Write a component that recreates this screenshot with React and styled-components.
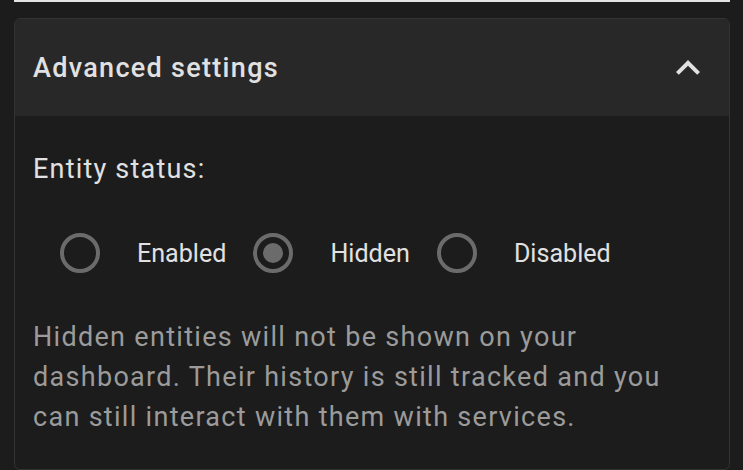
import React, { useState } from "react";
import styled, { createGlobalStyle } from "styled-components";

const Global = createGlobalStyle`
  html, body { margin: 0; padding: 0; background: #1c1c1c; }
  body { font-family: Roboto, "Noto Sans", sans-serif; -webkit-font-smoothing: antialiased; }
`;

const Page = styled.div`
  padding: 0 13px 0 14px;
  display: flex;
  flex-direction: column;
  gap: 16px;
  min-height: 470px;
  box-sizing: border-box;
`;

const TopRule = styled.div`
  height: 2px;
  background: #e4e4e4;
`;

const Panel = styled.section`
  border: 1px solid #333333;
  border-radius: 6px;
  overflow: hidden;
  background: #1c1c1c;
  flex: 1;
`;

const Header = styled.div`
  height: 97px;
  background: #282828;
  display: flex;
  align-items: center;
  justify-content: space-between;
  padding: 0 17px 0 18px;
`;

const Title = styled.h2`
  margin: 0;
  font-size: 27px;
  font-weight: 500;
  letter-spacing: 1.3px;
  color: #e1e1e1;
`;

const Chevron = styled.svg`
  width: 48px;
  height: 48px;
  fill: #e1e1e1;
  display: block;
`;

const Body = styled.div`
  padding: 33px 17px 0 18px;
`;

const Label = styled.div`
  font-size: 27px;
  line-height: 40px;
  letter-spacing: 1.2px;
  color: #e1e1e1;
`;

const RadioRow = styled.div`
  display: flex;
  align-items: center;
  height: 48px;
  margin-top: 40px;
`;

const Option = styled.label`
  display: flex;
  align-items: center;
  cursor: pointer;
`;

const RadioBox = styled.span`
  width: 94px;
  height: 48px;
  display: flex;
  align-items: center;
  justify-content: center;
`;

const Circle = styled.span`
  width: 40px;
  height: 40px;
  border-radius: 50%;
  border: 4px solid #6b6b6b;
  box-sizing: border-box;
  display: flex;
  align-items: center;
  justify-content: center;
  &::after {
    content: "";
    width: 20px;
    height: 20px;
    border-radius: 50%;
    background: #6b6b6b;
    display: ${(p) => (p.$checked ? "block" : "none")};
  }
`;

const OptionText = styled.span`
  padding-left: 10px;
  font-size: 25.1px;
  letter-spacing: 0;
  color: #e1e1e1;
`;

const Description = styled.p`
  margin: 40px 0 0;
  font-size: 27px;
  line-height: 40px;
  letter-spacing: 1.3px;
  color: #9b9b9b;
`;

const options = ["Enabled", "Hidden", "Disabled"];

export default function App() {
  const [value, setValue] = useState("Hidden");
  return (
    <>
      <Global />
      <Page>
        <TopRule />
        <Panel>
          <Header>
            <Title>Advanced settings</Title>
            <Chevron viewBox="0 0 24 24">
              <path d="M7.41,15.41L12,10.83L16.59,15.41L18,14L12,8L6,14L7.41,15.41Z" />
            </Chevron>
          </Header>
          <Body>
            <Label>Entity status:</Label>
            <RadioRow>
              {options.map((o) => (
                <Option key={o} onClick={() => setValue(o)}>
                  <RadioBox>
                    <Circle $checked={value === o} />
                  </RadioBox>
                  <OptionText>{o}</OptionText>
                </Option>
              ))}
            </RadioRow>
            <Description>
              Hidden entities will not be shown on your dashboard. Their history is still tracked and you can still interact with them with services.
            </Description>
          </Body>
        </Panel>
      </Page>
    </>
  );
}
